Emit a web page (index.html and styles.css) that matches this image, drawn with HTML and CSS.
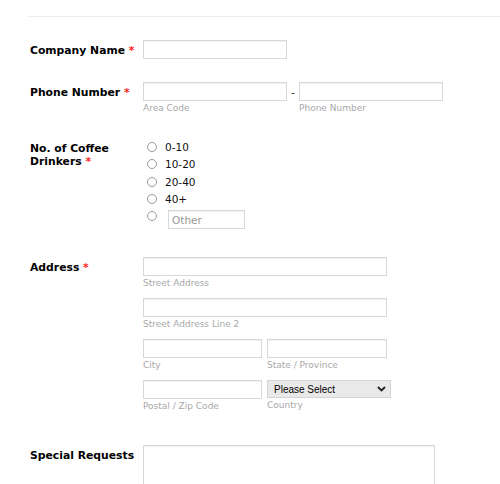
FILE: index.html
```html
<!DOCTYPE html>
<html>
<head>
<meta charset="utf-8">
<link rel="stylesheet" href="styles.css">
</head>
<body>
<div class="topline"></div>
<form class="form">
  <div class="row row-company">
    <label class="lbl nowrap">Company Name <span class="req">*</span></label>
    <div class="fields">
      <input class="inp w144" type="text">
    </div>
  </div>

  <div class="row row-phone">
    <label class="lbl nowrap">Phone Number <span class="req">*</span></label>
    <div class="fields phone">
      <div class="sub">
        <input class="inp w144" type="text">
        <span class="sublbl">Area Code</span>
      </div>
      <span class="dash">-</span>
      <div class="sub">
        <input class="inp w144" type="text">
        <span class="sublbl">Phone Number</span>
      </div>
    </div>
  </div>

  <div class="row row-coffee">
    <label class="lbl">No. of Coffee<br>Drinkers <span class="req">*</span></label>
    <div class="fields radios">
      <label class="opt"><input type="radio" name="c"><span>0-10</span></label>
      <label class="opt"><input type="radio" name="c"><span>10-20</span></label>
      <label class="opt"><input type="radio" name="c"><span>20-40</span></label>
      <label class="opt"><input type="radio" name="c"><span>40+</span></label>
      <label class="opt opt-other"><input type="radio" name="c"><input class="inp other" type="text" placeholder="Other"></label>
    </div>
  </div>

  <div class="row row-address">
    <label class="lbl nowrap">Address <span class="req">*</span></label>
    <div class="fields addr">
      <div class="sub full">
        <input class="inp w244" type="text">
        <span class="sublbl">Street Address</span>
      </div>
      <div class="sub full">
        <input class="inp w244" type="text">
        <span class="sublbl">Street Address Line 2</span>
      </div>
      <div class="pair">
        <div class="sub">
          <input class="inp w119" type="text">
          <span class="sublbl">City</span>
        </div>
        <div class="sub">
          <input class="inp w120" type="text">
          <span class="sublbl">State / Province</span>
        </div>
      </div>
      <div class="pair last">
        <div class="sub">
          <input class="inp w119" type="text">
          <span class="sublbl">Postal / Zip Code</span>
        </div>
        <div class="sub">
          <div class="select">
            <span>Please Select</span>
            <svg class="chev" width="9" height="6" viewBox="0 0 9 6"><path d="M1 1 L4.5 4.5 L8 1" fill="none" stroke="#222" stroke-width="1.8"/></svg>
          </div>
          <span class="sublbl country">Country</span>
        </div>
      </div>
    </div>
  </div>

  <div class="row row-special">
    <label class="lbl nowrap">Special Requests</label>
    <div class="fields">
      <textarea class="ta"></textarea>
    </div>
  </div>
</form>
</body>
</html>
```

FILE: styles.css
```css
html, body {
  margin: 0;
  padding: 0;
  background: #fff;
  overflow: hidden;
}
body {
  font-family: "DejaVu Sans", Verdana, sans-serif;
  color: #000;
}
.topline {
  margin-left: 28px;
  height: 16px;
  border-bottom: 1px solid #ececec;
}
.form {
  margin: 0;
  padding-left: 30px;
}
.row {
  display: flex;
  align-items: flex-start;
}
.lbl {
  width: 113px;
  flex: none;
  font-weight: bold;
  font-size: 10.8px;
  line-height: 13px;
  padding-top: 4px;
  box-sizing: border-box;
  padding-right: 4px;
}
.nowrap {
  white-space: nowrap;
}
.req {
  color: #f22;
}
.fields {
  display: flex;
  flex-direction: column;
}
.inp {
  box-sizing: border-box;
  height: 19px;
  border: 1px solid #d8d8d8;
  box-shadow: inset 0 1px 0 #f1f1f1;
  margin: 0;
  padding: 0 5px;
  font-family: "DejaVu Sans", Verdana, sans-serif;
  font-size: 10.5px;
  background: #fff;
  outline: none;
}
.w144 { width: 144px; }
.w244 { width: 244px; }
.w119 { width: 119px; }
.w120 { width: 120px; }

.row-company { margin-top: 23px; }
.row-phone { margin-top: 23px; }
.row-coffee { margin-top: 23px; }
.row-address { margin-top: 28px; }
.row-special { margin-top: 32px; }

.phone {
  flex-direction: row;
}
.sub {
  display: flex;
  flex-direction: column;
}
.sublbl {
  font-size: 9px;
  line-height: 14px;
  color: #a8a8a8;
}
.dash {
  width: 12px;
  text-align: center;
  font-size: 11px;
  line-height: 13px;
  padding-top: 4px;
  color: #333;
}

.opt {
  display: flex;
  align-items: center;
  height: 17.5px;
  font-size: 10.5px;
  color: #111;
}
.opt input[type=radio] {
  appearance: none;
  -webkit-appearance: none;
  width: 10px;
  height: 10px;
  margin: 0 0 0 4px;
  border: 1px solid #9a9a9a;
  border-radius: 50%;
  box-sizing: border-box;
  background: #fff;
  flex: none;
}
.opt span {
  margin-left: 8px;
}
.opt-other {
  align-items: flex-start;
  height: auto;
}
.opt-other input[type=radio] {
  margin-top: 3px;
}
.inp.other {
  width: 77px;
  margin-left: 11px;
  margin-top: 2px;
  font-size: 10.5px;
  padding-left: 3px;
}
.inp.other::placeholder {
  color: #999;
}

.addr .sub.full, .addr .pair {
  margin-bottom: 8px;
}
.addr .pair.last {
  margin-bottom: 0;
}
.pair {
  display: flex;
  gap: 5px;
}
.select {
  box-sizing: border-box;
  width: 124px;
  height: 18px;
  background: #e9e9e9;
  border: 1px solid #d4d4d4;
  display: flex;
  align-items: center;
  justify-content: space-between;
  padding: 0 4px 0 6px;
  font-family: "Liberation Sans", Arial, sans-serif;
  font-size: 10px;
  color: #000;
}
.chev {
  display: block;
}
.ta {
  box-sizing: border-box;
  width: 292px;
  height: 100px;
  border: 1px solid #d8d8d8;
  box-shadow: inset 0 1px 0 #f1f1f1;
  margin: 0;
  padding: 0;
  resize: none;
  display: block;
}
```
